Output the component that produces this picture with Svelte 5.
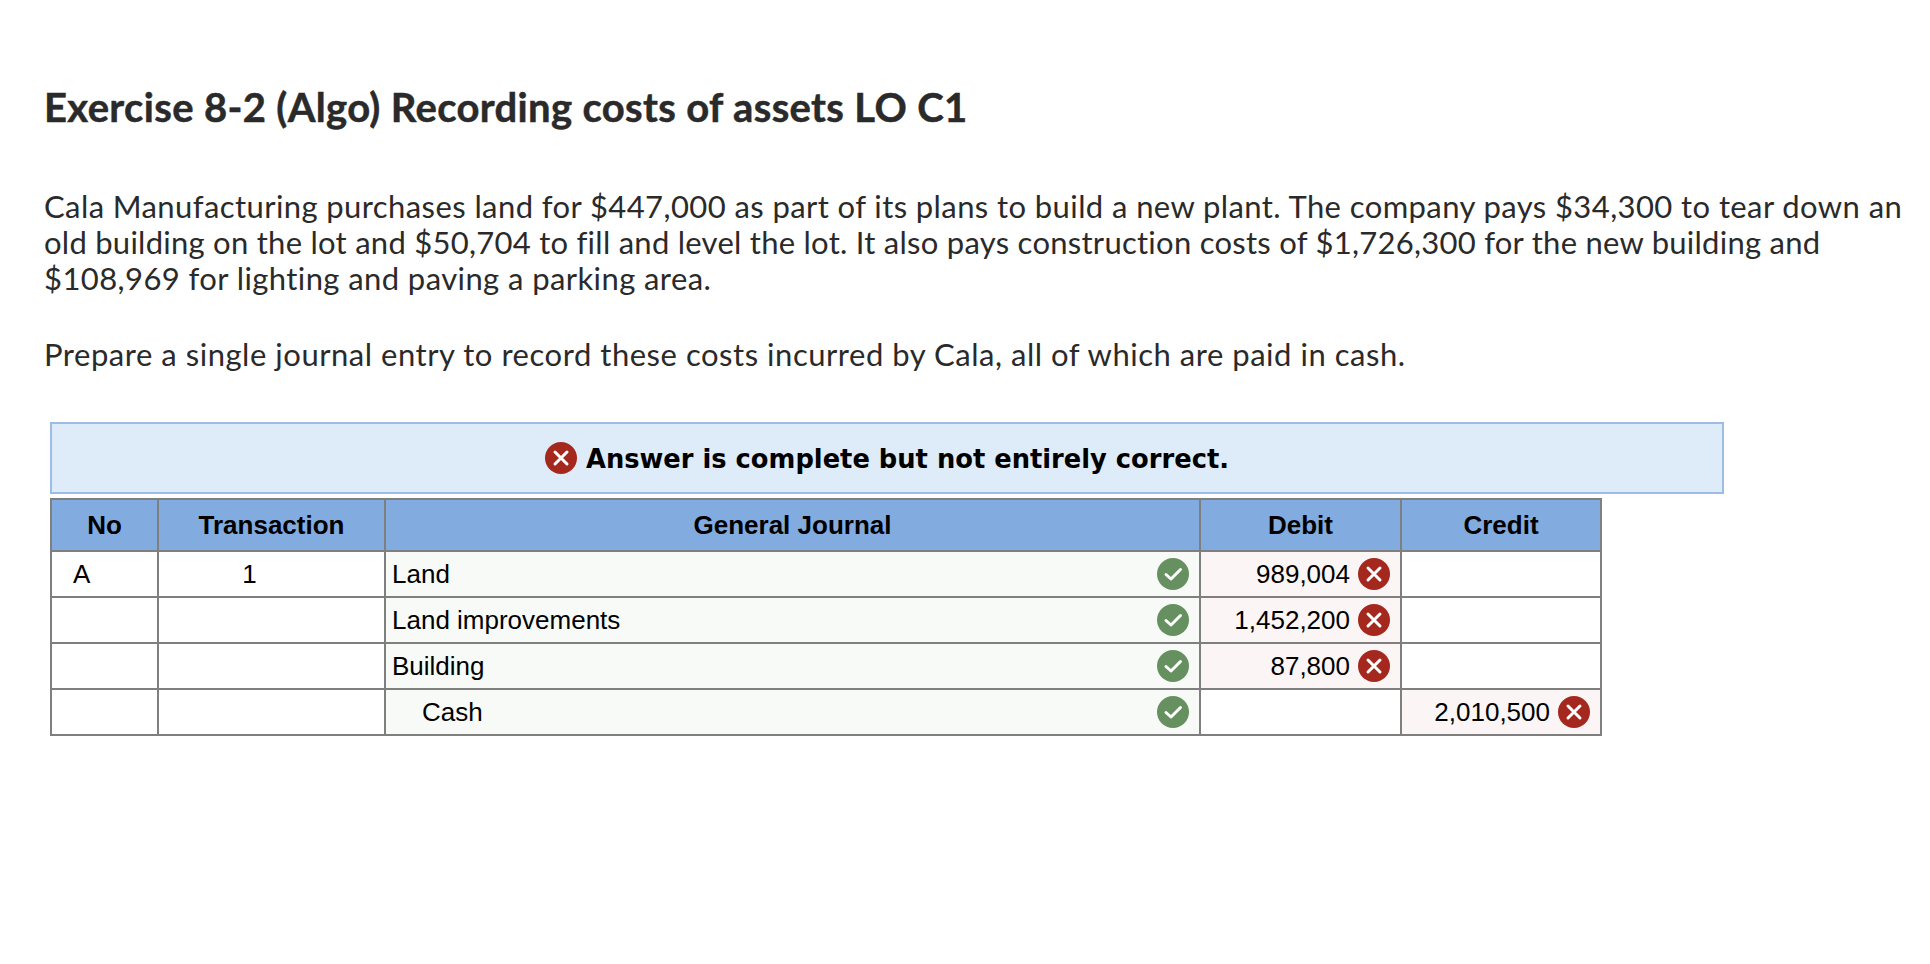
<script lang="ts">
  type Row = {
    no: string;
    tx: string;
    account: string;
    indent?: boolean;
    debit?: string;
    credit?: string;
  };

  const rows: Row[] = [
    { no: 'A', tx: '1', account: 'Land', debit: '989,004' },
    { no: '', tx: '', account: 'Land improvements', debit: '1,452,200' },
    { no: '', tx: '', account: 'Building', debit: '87,800' },
    { no: '', tx: '', account: 'Cash', indent: true, credit: '2,010,500' },
  ];
</script>

{#snippet cross()}
  <svg class="mark" viewBox="0 0 32 32" aria-hidden="true">
    <circle cx="16" cy="16" r="16" fill="#a5281f" />
    <path d="M10 10l12 12M22 10l-12 12" stroke="#fff" stroke-width="3" stroke-linecap="round" fill="none" />
  </svg>
{/snippet}

{#snippet check()}
  <svg class="mark" viewBox="0 0 32 32" aria-hidden="true">
    <circle cx="16" cy="16" r="16" fill="#66905f" />
    <path d="M9 16.5l5 4.5 9.5-9.5" stroke="#fff" stroke-width="3" stroke-linecap="round" stroke-linejoin="round" fill="none" />
  </svg>
{/snippet}

<main class="page">
  <h1>Exercise 8-2 (Algo) Recording costs of assets LO C1</h1>

  <p class="story">
    Cala Manufacturing purchases land for $447,000 as part of its plans to build a new plant. The company pays $34,300 to tear down an<br />
    <span class="tight">old building on the lot and $50,704 to fill and level the lot. It also pays construction costs of $1,726,300 for the new building and</span><br />
    $108,969 for lighting and paving a parking area.
  </p>

  <p class="task">Prepare a single journal entry to record these costs incurred by Cala, all of which are paid in cash.</p>

  <div class="banner">
    {@render cross()}
    <strong>Answer is complete but not entirely correct.</strong>
  </div>

  <table>
    <colgroup>
      <col class="c-no" />
      <col class="c-tx" />
      <col class="c-acc" />
      <col class="c-debit" />
      <col class="c-credit" />
    </colgroup>
    <thead>
      <tr>
        <th>No</th>
        <th>Transaction</th>
        <th>General Journal</th>
        <th>Debit</th>
        <th>Credit</th>
      </tr>
    </thead>
    <tbody>
      {#each rows as row}
        <tr>
          <td class="no">{row.no}</td>
          <td class="tx">{row.tx}</td>
          <td class="acc">
            <div class="cell-inner">
              <span class:indent={row.indent}>{row.account}</span>
              {@render check()}
            </div>
          </td>
          {#each [row.debit, row.credit] as amount}
            <td class:wrong={amount}>
              {#if amount}
                <div class="cell-inner end">
                  <span>{amount}</span>
                  {@render cross()}
                </div>
              {/if}
            </td>
          {/each}
        </tr>
      {/each}
    </tbody>
  </table>
</main>

<style>
  :global(body) {
    margin: 0;
    background: #fff;
  }

  .page {
    padding: 83px 0 0 44px;
    height: 881px;
    overflow: hidden;
    color: #2a2a2a;
    font-family: Lato, "Liberation Sans", sans-serif;
    font-variant-ligatures: none;
  }

  h1 {
    margin: 0;
    font-size: 40px;
    line-height: 48px;
    font-weight: 700;
    letter-spacing: 0.35px;
    -webkit-text-stroke: 0.5px #2a2a2a;
  }

  .story {
    margin: 57px 0 0;
    width: 1880px;
    font-size: 31px;
    line-height: 36px;
    letter-spacing: 0.41px;
    white-space: nowrap;
  }

  .tight {
    letter-spacing: 0.26px;
  }

  .task {
    margin: 40px 0 0;
    font-size: 31px;
    line-height: 36px;
    letter-spacing: 0.53px;
  }

  .banner {
    box-sizing: border-box;
    display: flex;
    align-items: center;
    justify-content: center;
    gap: 9px;
    margin: 50px 0 0 6px;
    width: 1674px;
    height: 72px;
    border: 2px solid #9dbde2;
    background: #deebf8;
    color: #000;
    font-family: "DejaVu Sans", sans-serif;
    font-size: 25.75px;
  }

  .banner strong {
    margin-top: 2px;
    font-weight: 700;
  }

  table {
    margin: 4px 0 0 6px;
    width: 1550px;
    border-collapse: collapse;
    table-layout: fixed;
    color: #000;
    font-family: "Liberation Sans", sans-serif;
    font-size: 26px;
  }

  .c-no { width: 107px; }
  .c-tx { width: 227px; }
  .c-acc { width: 815px; }
  .c-debit { width: 201px; }
  .c-credit { width: 200px; }

  th,
  td {
    box-sizing: border-box;
    padding: 0;
    border: 2px solid #7f7f7f;
  }

  th {
    height: 52px;
    background: #82abdf;
    font-weight: 700;
    text-align: center;
  }

  td {
    height: 46px;
    background: #fff;
  }

  .no {
    padding-left: 21px;
  }

  .tx {
    text-align: center;
    padding-right: 44px;
  }

  .acc {
    background: #f7faf6;
  }

  .wrong {
    background: #fbf5f5;
  }

  .cell-inner {
    display: flex;
    align-items: center;
    justify-content: space-between;
    padding: 0 10px 0 6px;
  }

  .cell-inner.end {
    justify-content: flex-end;
    gap: 8px;
  }

  .indent {
    margin-left: 30px;
  }

  .mark {
    display: block;
    flex: none;
    width: 32px;
    height: 32px;
  }
</style>
